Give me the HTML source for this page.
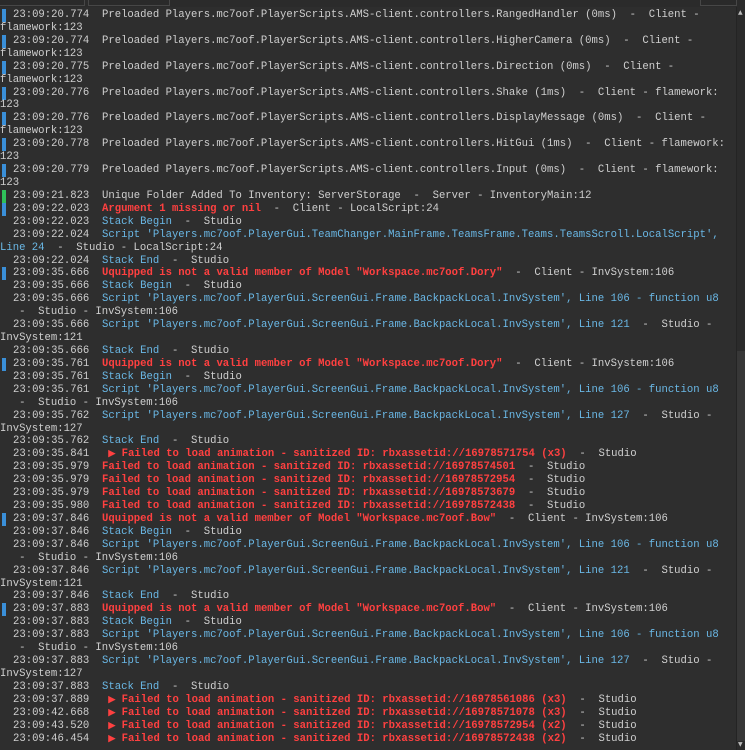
<!DOCTYPE html>
<html><head><meta charset="utf-8"><style>
html,body{margin:0;padding:0;background:#2e2e2e;width:745px;height:750px;overflow:hidden}
.top{position:absolute;left:0;top:0;width:745px;height:7px;background:#2b2b2b}
.tab{position:absolute;top:-4px;height:8px;border:1px solid #474747;background:#2a2a2a}
.log{position:absolute;left:0;top:9px;width:736px;font-family:"Liberation Mono",monospace;font-size:10.6px;line-height:12.93px;color:#cfcfcf}
.r{height:12.93px;position:relative;white-space:pre;overflow:visible}
.f{padding-left:13px}
.b{color:#6ab8e6}
.e{color:#ff4040;font-weight:bold}
.t{font-size:9px}
.m{position:absolute;left:2px;top:0px;width:4px;height:13px;background:#3a8fd8}
.g{background:#2fc05a}
.sb{position:absolute;left:736px;top:7px;width:9px;height:743px;background:#2b2b2b;border-left:1px solid #242424}
.th{position:absolute;left:737px;top:351px;width:8px;height:390px;background:#373737}
.ar{position:absolute;left:738px;font-size:6px;color:#bbb;font-family:"DejaVu Sans",sans-serif}
</style></head><body>
<div class="top"><div class="tab" style="left:-2px;width:85px"></div><div class="tab" style="left:88px;width:80px"></div><div class="tab" style="left:700px;width:35px"></div></div>
<div class="log"><div class="r f"><i class="m"></i>23:09:20.774  Preloaded Players.mc7oof.PlayerScripts.AMS-client.controllers.RangedHandler (0ms)  -  Client -</div><div class="r">flamework:123</div><div class="r f"><i class="m"></i>23:09:20.774  Preloaded Players.mc7oof.PlayerScripts.AMS-client.controllers.HigherCamera (0ms)  -  Client -</div><div class="r">flamework:123</div><div class="r f"><i class="m"></i>23:09:20.775  Preloaded Players.mc7oof.PlayerScripts.AMS-client.controllers.Direction (0ms)  -  Client -</div><div class="r">flamework:123</div><div class="r f"><i class="m"></i>23:09:20.776  Preloaded Players.mc7oof.PlayerScripts.AMS-client.controllers.Shake (1ms)  -  Client - flamework:</div><div class="r">123</div><div class="r f"><i class="m"></i>23:09:20.776  Preloaded Players.mc7oof.PlayerScripts.AMS-client.controllers.DisplayMessage (0ms)  -  Client -</div><div class="r">flamework:123</div><div class="r f"><i class="m"></i>23:09:20.778  Preloaded Players.mc7oof.PlayerScripts.AMS-client.controllers.HitGui (1ms)  -  Client - flamework:</div><div class="r">123</div><div class="r f"><i class="m"></i>23:09:20.779  Preloaded Players.mc7oof.PlayerScripts.AMS-client.controllers.Input (0ms)  -  Client - flamework:</div><div class="r">123</div><div class="r f"><i class="m g"></i>23:09:21.823  Unique Folder Added To Inventory: ServerStorage  -  Server - InventoryMain:12</div><div class="r f"><i class="m"></i>23:09:22.023  <span class="e">Argument 1 missing or nil</span>  -  Client - LocalScript:24</div><div class="r f">23:09:22.023  <span class="b">Stack Begin</span>  -  Studio</div><div class="r f">23:09:22.024  <span class="b">Script 'Players.mc7oof.PlayerGui.TeamChanger.MainFrame.TeamsFrame.Teams.TeamsScroll.LocalScript',</span></div><div class="r"><span class="b">Line 24</span>  -  Studio - LocalScript:24</div><div class="r f">23:09:22.024  <span class="b">Stack End</span>  -  Studio</div><div class="r f"><i class="m"></i>23:09:35.666  <span class="e">Uquipped is not a valid member of Model "Workspace.mc7oof.Dory"</span>  -  Client - InvSystem:106</div><div class="r f">23:09:35.666  <span class="b">Stack Begin</span>  -  Studio</div><div class="r f">23:09:35.666  <span class="b">Script 'Players.mc7oof.PlayerGui.ScreenGui.Frame.BackpackLocal.InvSystem', Line 106 - function u8</span></div><div class="r">   -  Studio - InvSystem:106</div><div class="r f">23:09:35.666  <span class="b">Script 'Players.mc7oof.PlayerGui.ScreenGui.Frame.BackpackLocal.InvSystem', Line 121</span>  -  Studio -</div><div class="r">InvSystem:121</div><div class="r f">23:09:35.666  <span class="b">Stack End</span>  -  Studio</div><div class="r f"><i class="m"></i>23:09:35.761  <span class="e">Uquipped is not a valid member of Model "Workspace.mc7oof.Dory"</span>  -  Client - InvSystem:106</div><div class="r f">23:09:35.761  <span class="b">Stack Begin</span>  -  Studio</div><div class="r f">23:09:35.761  <span class="b">Script 'Players.mc7oof.PlayerGui.ScreenGui.Frame.BackpackLocal.InvSystem', Line 106 - function u8</span></div><div class="r">   -  Studio - InvSystem:106</div><div class="r f">23:09:35.762  <span class="b">Script 'Players.mc7oof.PlayerGui.ScreenGui.Frame.BackpackLocal.InvSystem', Line 127</span>  -  Studio -</div><div class="r">InvSystem:127</div><div class="r f">23:09:35.762  <span class="b">Stack End</span>  -  Studio</div><div class="r f">23:09:35.841  <span class="e"> <span class="t">▶</span> Failed to load animation - sanitized ID: rbxassetid://16978571754 (x3)</span>  -  Studio</div><div class="r f">23:09:35.979  <span class="e">Failed to load animation - sanitized ID: rbxassetid://16978574501</span>  -  Studio</div><div class="r f">23:09:35.979  <span class="e">Failed to load animation - sanitized ID: rbxassetid://16978572954</span>  -  Studio</div><div class="r f">23:09:35.979  <span class="e">Failed to load animation - sanitized ID: rbxassetid://16978573679</span>  -  Studio</div><div class="r f">23:09:35.980  <span class="e">Failed to load animation - sanitized ID: rbxassetid://16978572438</span>  -  Studio</div><div class="r f"><i class="m"></i>23:09:37.846  <span class="e">Uquipped is not a valid member of Model "Workspace.mc7oof.Bow"</span>  -  Client - InvSystem:106</div><div class="r f">23:09:37.846  <span class="b">Stack Begin</span>  -  Studio</div><div class="r f">23:09:37.846  <span class="b">Script 'Players.mc7oof.PlayerGui.ScreenGui.Frame.BackpackLocal.InvSystem', Line 106 - function u8</span></div><div class="r">   -  Studio - InvSystem:106</div><div class="r f">23:09:37.846  <span class="b">Script 'Players.mc7oof.PlayerGui.ScreenGui.Frame.BackpackLocal.InvSystem', Line 121</span>  -  Studio -</div><div class="r">InvSystem:121</div><div class="r f">23:09:37.846  <span class="b">Stack End</span>  -  Studio</div><div class="r f"><i class="m"></i>23:09:37.883  <span class="e">Uquipped is not a valid member of Model "Workspace.mc7oof.Bow"</span>  -  Client - InvSystem:106</div><div class="r f">23:09:37.883  <span class="b">Stack Begin</span>  -  Studio</div><div class="r f">23:09:37.883  <span class="b">Script 'Players.mc7oof.PlayerGui.ScreenGui.Frame.BackpackLocal.InvSystem', Line 106 - function u8</span></div><div class="r">   -  Studio - InvSystem:106</div><div class="r f">23:09:37.883  <span class="b">Script 'Players.mc7oof.PlayerGui.ScreenGui.Frame.BackpackLocal.InvSystem', Line 127</span>  -  Studio -</div><div class="r">InvSystem:127</div><div class="r f">23:09:37.883  <span class="b">Stack End</span>  -  Studio</div><div class="r f">23:09:37.889  <span class="e"> <span class="t">▶</span> Failed to load animation - sanitized ID: rbxassetid://16978561086 (x3)</span>  -  Studio</div><div class="r f">23:09:42.668  <span class="e"> <span class="t">▶</span> Failed to load animation - sanitized ID: rbxassetid://16978571078 (x3)</span>  -  Studio</div><div class="r f">23:09:43.520  <span class="e"> <span class="t">▶</span> Failed to load animation - sanitized ID: rbxassetid://16978572954 (x2)</span>  -  Studio</div><div class="r f">23:09:46.454  <span class="e"> <span class="t">▶</span> Failed to load animation - sanitized ID: rbxassetid://16978572438 (x2)</span>  -  Studio</div></div>
<div class="sb"></div><div class="th"></div>
<div class="ar" style="top:9px">▲</div><div class="ar" style="top:741px">▼</div>
</body></html>
